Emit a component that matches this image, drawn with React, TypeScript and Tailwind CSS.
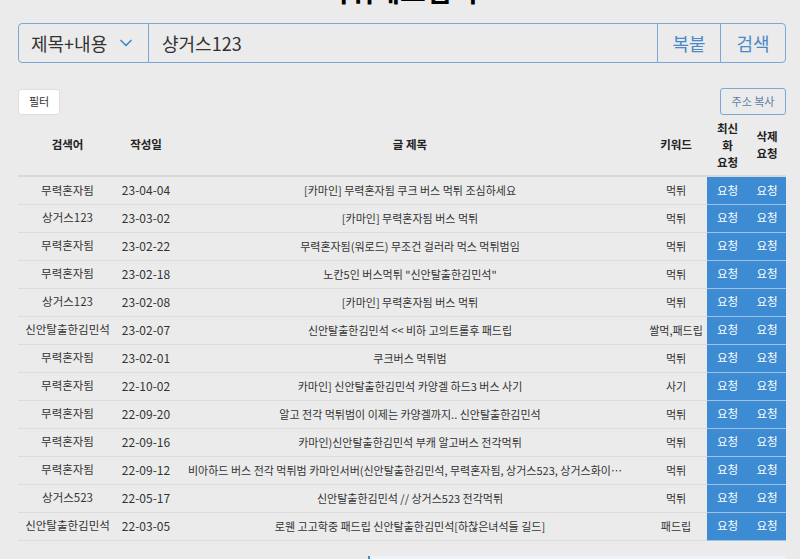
import { ChevronDown } from 'lucide-react'

const rows = [
  ['무력혼자됨', '23-04-04', '[카마인] 무력혼자됨 쿠크 버스 먹튀 조심하세요', '먹튀'],
  ['상거스123', '23-03-02', '[카마인] 무력혼자됨 버스 먹튀', '먹튀'],
  ['무력혼자됨', '23-02-22', '무력혼자됨(워로드) 무조건 걸러라 먹스 먹튀범임', '먹튀'],
  ['무력혼자됨', '23-02-18', '노칸5인 버스먹튀 "신안탈출한김민석"', '먹튀'],
  ['상거스123', '23-02-08', '[카마인] 무력혼자됨 버스 먹튀', '먹튀'],
  ['신안탈출한김민석', '23-02-07', '신안탈출한김민석 << 비하 고의트롤후 패드립', '쌀먹,패드립'],
  ['무력혼자됨', '23-02-01', '쿠크버스 먹튀범', '먹튀'],
  ['무력혼자됨', '22-10-02', '카마인] 신안탈출한김민석 카양겔 하드3 버스 사기', '사기'],
  ['무력혼자됨', '22-09-20', '알고 전각 먹튀범이 이제는 카양겔까지.. 신안탈출한김민석', '먹튀'],
  ['무력혼자됨', '22-09-16', '카마인)신안탈출한김민석 부캐 알고버스 전각먹튀', '먹튀'],
  [
    '무력혼자됨',
    '22-09-12',
    '비아하드 버스 전각 먹튀범 카마인서버(신안탈출한김민석, 무력혼자됨, 상거스523, 상거스화이팅, 신안탈출한김민석2)',
    '먹튀',
  ],
  ['상거스523', '22-05-17', '신안탈출한김민석 // 상거스523 전각먹튀', '먹튀'],
  ['신안탈출한김민석', '22-03-05', '로웬 고고학중 패드립 신안탈출한김민석[하찮은녀석들 길드]', '패드립'],
]

export default function App() {
  return (
    <div
      className="h-[559px] bg-[#ebebeb] text-[#333] overflow-hidden"
      style={{ fontFamily: '"Noto Sans CJK KR", "Noto Sans", sans-serif' }}
    >
      <div className="h-[23px] overflow-hidden">
        <div className="mt-[-24px] text-center text-[28px] leading-[28px] font-bold text-black">먹튀제보검색</div>
      </div>

      <div className="pl-[18px] pr-[14px]">
        {/* search bar */}
        <div className="flex h-[40px] border border-[#7aa7d6] rounded-[4px] text-[18px]">
          <div className="w-[130px] flex items-center justify-between pl-[12px] pr-[12px] border-r border-[#7aa7d6]">
            <span>제목+내용</span>
            <ChevronDown className="w-[20px] h-[20px] text-[#3d86cc]" strokeWidth={2} />
          </div>
          <div className="flex-1 flex items-center pl-[13px]">샹거스123</div>
          <div className="w-[63px] flex items-center justify-center border-l border-[#7aa7d6] text-[#4a88c7]">복붙</div>
          <div className="w-[65px] flex items-center justify-center border-l border-[#7aa7d6] text-[#4a88c7]">검색</div>
        </div>

        <div className="mt-[25px] flex justify-between items-center">
          <button className="h-[26px] px-[10px] bg-white border border-[#dedede] rounded-[3px] text-[11px] text-[#333]">
            필터
          </button>
          <button className="h-[27px] w-[66px] border border-[#7aa7d6] rounded-[3px] text-[11px] text-[#5a7fa5]">
            주소 복사
          </button>
        </div>

        <table className="w-full table-fixed border-collapse text-[11.5px]">
          <colgroup>
            <col className="w-[99px]" />
            <col className="w-[58px]" />
            <col />
            <col className="w-[62px]" />
            <col className="w-[41px]" />
            <col className="w-[38px]" />
          </colgroup>
          <thead>
            <tr className="h-[61px] border-b-2 border-[#d9d9d9] font-bold text-[#222]">
              <th>검색어</th>
              <th>작성일</th>
              <th>글 제목</th>
              <th>키워드</th>
              <th className="leading-[17px]">
                최신
                <br />화<br />
                요청
              </th>
              <th className="leading-[17px]">
                삭제
                <br />
                요청
              </th>
            </tr>
          </thead>
          <tbody>
            {rows.map((r, i) => (
              <tr key={i} className="h-[28px] border-b border-[#dcdcdc]">
                <td className="text-center whitespace-nowrap">{r[0]}</td>
                <td className="text-center whitespace-nowrap text-[12px]">{r[1]}</td>
                <td className="text-center px-[13px] whitespace-nowrap overflow-hidden text-ellipsis text-[11px]">
                  {r[2]}
                </td>
                <td className="text-center whitespace-nowrap text-[11px]">{r[3]}</td>
                <td className="text-center bg-[#3d8bd3] text-white border-b border-[#9fc3e6]">요청</td>
                <td className="text-center bg-[#3d8bd3] text-white border-b border-[#9fc3e6]">요청</td>
              </tr>
            ))}
          </tbody>
        </table>

        <div className="mt-[15px] ml-[350px] h-[40px] bg-[#eef3f9] border-l-2 border-[#3d8bd3] rounded-tr-[4px]"></div>
      </div>
    </div>
  )
}
